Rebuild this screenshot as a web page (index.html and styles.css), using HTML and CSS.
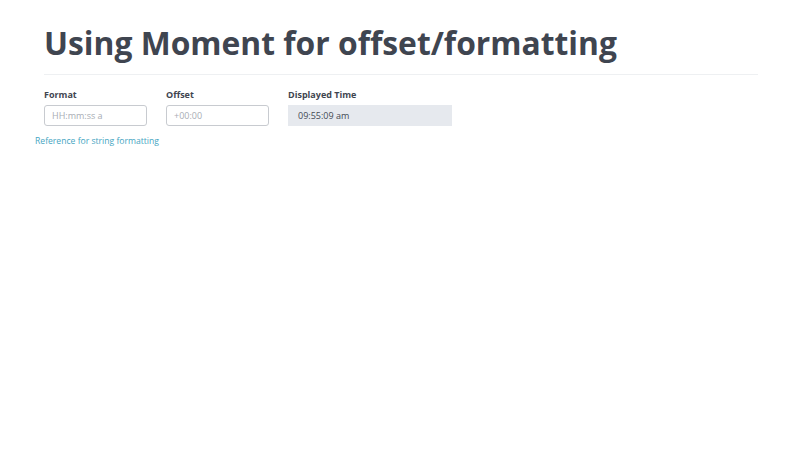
FILE: index.html
```html
<!DOCTYPE html>
<html>
<head>
<meta charset="utf-8">
<link rel="stylesheet" href="styles.css">
</head>
<body>
<div class="page">
  <h1 class="title">Using Moment for offset/formatting</h1>
  <div class="rule"></div>
  <div class="fields">
    <div class="field">
      <label class="label">Format</label>
      <div class="input placeholder">HH:mm:ss a</div>
    </div>
    <div class="field">
      <label class="label">Offset</label>
      <div class="input placeholder">+00:00</div>
    </div>
    <div class="field">
      <label class="label">Displayed Time</label>
      <div class="output">09:55:09 am</div>
    </div>
  </div>
</div>
<a class="ref" href="#">Reference for string formatting</a>
</body>
</html>
```
FILE: styles.css
```css
html, body {
  margin: 0;
  padding: 0;
  background: #fff;
  font-family: "Open Sans", "Liberation Sans", sans-serif;
}
.page {
  padding: 0 42px 0 44px;
}
.title {
  margin: 0;
  padding-top: 23px;
  font-size: 31.8px;
  font-weight: 700;
  color: #3f4550;
  line-height: 40px;
}
.rule {
  margin-top: 11px;
  height: 1px;
  background: #eef0f2;
}
.fields {
  display: flex;
  gap: 19px;
  margin-top: 13px;
}
.field {
  display: flex;
  flex-direction: column;
}
.label {
  font-size: 9px;
  font-weight: 700;
  color: #3f4550;
  line-height: 14px;
  margin-bottom: 3px;
}
.input {
  box-sizing: border-box;
  width: 103px;
  height: 21px;
  border: 1px solid #c8cbd0;
  border-radius: 3px;
  padding: 0 7px;
  font-size: 9px;
  line-height: 19px;
  color: #a8adb4;
}
.output {
  box-sizing: border-box;
  width: 164px;
  height: 21px;
  background: #e6e9ee;
  padding: 0 10px;
  font-size: 9px;
  line-height: 21px;
  color: #444a54;
}
.ref {
  display: block;
  margin: 8px 0 0 35px;
  font-size: 8.6px;
  color: #45a5c2;
  text-decoration: none;
  line-height: 14px;
}
```
